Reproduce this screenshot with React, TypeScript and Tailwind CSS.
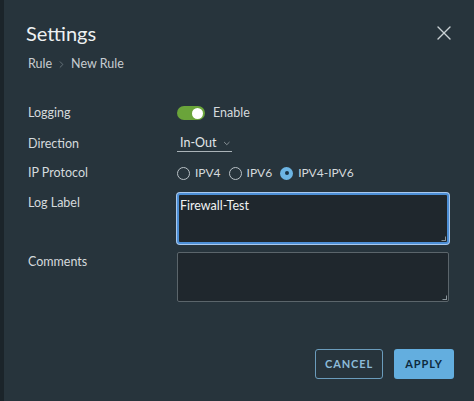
import { X, ChevronDown, ChevronRight } from "lucide-react";

const font = { fontFamily: "Lato, 'Noto Sans', sans-serif" };

function Row({ label, children, className = "", labelClass = "" }: { label: string; children: React.ReactNode; className?: string; labelClass?: string }) {
  return (
    <div className={`flex ${className}`}>
      <div className={`w-[149px] shrink-0 text-[12.5px] leading-[16px] text-[#d5dadd] ${labelClass}`}>{label}</div>
      <div className="flex-1">{children}</div>
    </div>
  );
}

function Radio({ label, checked }: { label: string; checked?: boolean }) {
  return (
    <label className="flex items-center gap-[5px]">
      {checked ? (
        <span className="flex size-[13px] items-center justify-center rounded-full bg-[#6db5e4]">
          <span className="size-[4px] rounded-full bg-[#1b3446]" />
        </span>
      ) : (
        <span className="size-[13px] rounded-full border border-[#b9c1c6]" />
      )}
      <span className="text-[12px] leading-[16px] text-[#d5dadd]">{label}</span>
    </label>
  );
}

function Grip() {
  return (
    <span className="absolute bottom-[1px] right-[1px] h-[5px] w-[5px] border-r border-b border-[#8a959b] [clip-path:polygon(100%_0,100%_100%,0_100%)]" />
  );
}

export default function App() {
  return (
    <div className="flex h-[401px] w-[474px] bg-[#1b242a]" style={font}>
      <div className="w-[4px] shrink-0" />
      <div className="flex flex-1 flex-col bg-[#27343c] pl-[22px] pr-[18px]">
        {/* header */}
        <div className="flex items-start justify-between pt-[21px]">
          <h1 className="text-[20px] leading-[24px] text-[#eef1f2]">Settings</h1>
          <X className="size-[24px] text-[#c9d0d4]" strokeWidth={1.4} />
        </div>
        <div className="mt-[11px] flex items-center gap-[4px] pl-[2px] text-[12.5px] leading-[16px] text-[#c7cdd1]">
          <span>Rule</span>
          <ChevronRight className="size-[11px] text-[#7d8a92]" strokeWidth={1.5} />
          <span>New Rule</span>
        </div>

        {/* form */}
        <div className="mt-[33px] flex flex-col pl-[2px]">
          <Row label="Logging" className="items-center">
            <div className="flex items-center gap-[8px]">
              <span className="flex h-[14px] w-[28px] items-center justify-end rounded-full bg-[#6aa43a] pr-[2px]">
                <span className="size-[11px] rounded-full bg-white" />
              </span>
              <span className="text-[12.5px] leading-[16px] text-[#d5dadd]">Enable</span>
            </div>
          </Row>
          <Row label="Direction" className="mt-[14px] items-center">
            <div className="flex w-[55px] items-center gap-[6px] whitespace-nowrap border-b border-[#aab3b8] pl-[3px]">
              <span className="text-[12.5px] leading-[16px] text-[#e3e7e9]">In-Out</span>
              <ChevronDown className="size-[11px] text-[#c0c7cb]" strokeWidth={1.6} />
            </div>
          </Row>
          <Row label="IP Protocol" className="mt-[13px] items-center">
            <div className="flex items-center gap-[8px]">
              <Radio label="IPV4" />
              <Radio label="IPV6" />
              <Radio label="IPV4-IPV6" checked />
            </div>
          </Row>
          <Row label="Log Label" className="mt-[12px]" labelClass="pt-[2px]">
            <div className="relative h-[51px] w-[272px] rounded-[3px] border-2 border-[#4d8fd6] bg-[#1f272d] px-[1px] pt-[3px] text-[12.5px] leading-[16px] text-[#f1f3f4] shadow-[0_0_0_1px_#a9c9ee]">
              Firewall-Test
              <Grip />
            </div>
          </Row>
          <Row label="Comments" className="mt-[8px]" labelClass="pt-[2px]">
            <div className="relative h-[50px] w-[272px] rounded-[2px] border border-[#5b656b] bg-[#1f272d]">
              <Grip />
            </div>
          </Row>
        </div>

        {/* footer */}
        <div className="mt-auto mb-[22px] flex justify-end gap-[11px] pr-[2px]">
          <button className="h-[30px] w-[68px] rounded-[3px] border border-[#6b9cbc] text-[11px] font-bold tracking-[0.08em] text-[#8cbbd9]">
            CANCEL
          </button>
          <button className="h-[30px] w-[60px] rounded-[3px] bg-[#63aedf] text-[11px] font-bold tracking-[0.08em] text-[#0e2a3e]">
            APPLY
          </button>
        </div>
      </div>
    </div>
  );
}
